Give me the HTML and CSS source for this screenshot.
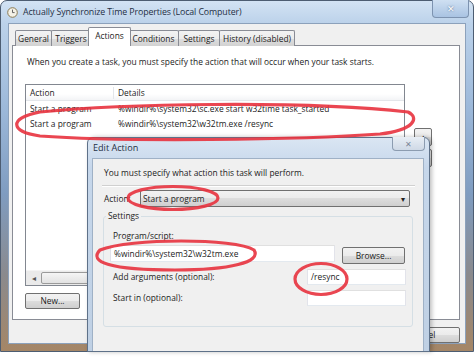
FILE: index.html
```html
<!DOCTYPE html>
<html>
<head>
<meta charset="utf-8">
<link rel="stylesheet" href="styles.css">
</head>
<body>
<div class="win">
  <div class="tbar">
    <svg class="ticon" width="11" height="11" viewBox="0 0 11 11"><circle cx="5.5" cy="5.5" r="4.8" fill="#f4f1e6" stroke="#8a7a52" stroke-width="1"/><path d="M5.5 2.6V5.6H7.6" fill="none" stroke="#555" stroke-width="0.9"/></svg>
    <span class="ttext">Actually Synchronize Time Properties (Local Computer)</span>
    <div class="tclose">&#x2715;</div>
  </div>
  <div class="client">
    <div class="tabs">
      <div class="tab t1">General</div>
      <div class="tab t2">Triggers</div>
      <div class="tab t3 sel">Actions</div>
      <div class="tab t4">Conditions</div>
      <div class="tab t5">Settings</div>
      <div class="tab t6">History (disabled)</div>
    </div>
    <div class="panel">
      <div class="intro">When you create a task, you must specify the action that will occur when your task starts.</div>
      <div class="listarea">
        <div class="list">
          <div class="lhead"><div class="c1">Action</div><div class="c2">Details</div></div>
          <div class="lrow"><div class="c1">Start a program</div><div class="c2">%windir%\system32\sc.exe start w32time task_started</div></div>
          <div class="lrow"><div class="c1">Start a program</div><div class="c2">%windir%\system32\w32tm.exe /resync</div></div>
          <div class="lfill"></div>
          <div class="hscroll"><div class="sarrow">&#x25C2;</div><div class="thumb"></div></div>
        </div>
        <div class="sidebtns">
          <div class="sbtn">&#x25B4;</div>
          <div class="sbtn">&#x25BE;</div>
        </div>
      </div>
      <div class="pbtns">
        <div class="btn newb">New...</div>
      </div>
    </div>
    <div class="dlgbtns">
      <div class="btn cancelb">Cancel</div>
    </div>
  </div>
</div>

<div class="dlg">
  <div class="dtbar">
    <span class="dtitle">Edit Action</span>
    <div class="dclose">&#x2715;</div>
  </div>
  <div class="dclient">
    <div class="dintro">You must specify what action this task will perform.</div>
    <div class="sep"></div>
    <div class="arow">
      <span class="alabel">Action:</span>
      <div class="combo"><span>Start a program</span><span class="carrow">&#x25BE;</span></div>
    </div>
    <fieldset class="group">
      <legend>Settings</legend>
      <div class="pslabel">Program/script:</div>
      <div class="psrow">
        <div class="input wide">%windir%\system32\w32tm.exe</div>
        <div class="btn browse">Browse...</div>
      </div>
      <div class="argrow r1"><span>Add arguments (optional):</span><div class="input short">/resync</div></div>
      <div class="argrow r2"><span>Start in (optional):</span><div class="input short"></div></div>
    </fieldset>
  </div>
</div>

<svg class="marks" width="474" height="359" viewBox="0 0 474 359">
  <g fill="none" stroke="#e8333f" stroke-width="3.2" stroke-linecap="round" opacity="0.9">
    <path d="M40 112 C120 104 300 100 408 112 C420 118 414 130 380 134 C300 140 120 142 40 136 C10 132 8 118 40 112 Z"/>
    <ellipse cx="173" cy="198" rx="45" ry="11.5"/>
    <path d="M100 250 C130 238 235 238 254 250 C262 262 230 270 175 270 C110 270 88 262 100 250 Z"/>
    <ellipse cx="321" cy="279" rx="26" ry="15.5"/>
  </g>
</svg>
</body>
</html>
```
FILE: styles.css
```css
* { box-sizing: border-box; }
body {
  margin: 0;
  width: 474px;
  height: 359px;
  overflow: hidden;
  background: #fff;
  position: relative;
  font-family: "Open Sans", "Noto Sans", sans-serif;
  font-size: 8.4px;
  color: #1b1b1b;
  line-height: 12px;
}
.win {
  height: 352px;
  display: flex;
  flex-direction: column;
  background: linear-gradient(to bottom, #d3e3f4 0px, #bcd2ea 22px, #9db9da 30%, #7f9cc0 55%, #8a8a8e 78%, #a58666 100%);
  border: 1px solid #4d5d72;
  border-radius: 7px 7px 0 0;
}
.tbar {
  height: 22px;
  display: flex;
  align-items: center;
  padding-left: 6px;
  padding-right: 4px;
}
.ticon { margin-right: 5px; }
.ttext { font-size: 8.8px; color: #1f2f44; flex: 1; letter-spacing: -0.1px; }
.tclose {
  width: 37px;
  height: 18px;
  align-self: flex-start;
  margin-top: -1px;
  border: 1px solid #7d93b0;
  border-top: none;
  border-radius: 0 0 4px 4px;
  background: linear-gradient(#cfe0f2, #a9c3e2);
  color: #fff;
  font-size: 9px;
  display: flex;
  align-items: center;
  justify-content: center;
  text-shadow: 0 0 2px #4a6080;
}
.client {
  flex: 1;
  margin: 0 7px 7px 7px;
  background: #f0f0f0;
  border: 1px solid #8ca1bb;
  padding: 3px 5px 0 3px;
  display: flex;
  flex-direction: column;
}
.tabs {
  display: flex;
  align-items: flex-end;
  height: 19px;
  padding-left: 3px;
  margin-bottom: -1px;
  position: relative;
  z-index: 1;
}
.tab {
  height: 16px;
  border: 1px solid #898c95;
  border-bottom: none;
  border-radius: 2px 2px 0 0;
  background: linear-gradient(#f3f3f3, #ececec 50%, #dedede 50%, #d2d2d2);
  display: flex;
  align-items: center;
  justify-content: center;
  margin-right: -1px;
  white-space: nowrap;
}
.tab.sel {
  height: 19px;
  background: #fff;
  position: relative;
  z-index: 2;
  margin-left: -2px;
  margin-right: -3px;
  padding-bottom: 2px;
}
.t1 { width: 37px; }
.t2 { width: 40px; }
.t3 { width: 43px; }
.t4 { width: 51px; }
.t5 { width: 42px; }
.t6 { width: 76px; }
.panel {
  height: 275px;
  background: #fff;
  border: 1px solid #898c95;
  padding: 10px 0 0 12px;
  display: flex;
  flex-direction: column;
}
.intro { margin-left: 2px; white-space: nowrap; }
.listarea { display: flex; margin-top: 16px; }
.list {
  width: 380px;
  height: 202px;
  border: 1px solid #828790;
  display: flex;
  flex-direction: column;
}
.lhead {
  height: 16px;
  display: flex;
  align-items: center;
  background: linear-gradient(#fff 60%, #f3f4f6);
  border-bottom: 1px solid #e3e6ea;
}
.lhead .c1 { border-right: 1px solid #e3e6ea; }
.c1 { width: 88px; padding-left: 4px; white-space: nowrap; }
.c2 { padding-left: 4px; white-space: nowrap; }
.lrow { height: 15px; display: flex; align-items: center; }
.lfill { flex: 1; }
.hscroll {
  height: 15px;
  display: flex;
  background: #eaeaea;
  border-top: 1px solid #f4f4f4;
}
.sarrow {
  width: 15px;
  display: flex;
  align-items: center;
  justify-content: center;
  color: #555;
  font-size: 8px;
}
.thumb {
  width: 260px;
  margin: 1px 0;
  border: 1px solid #9a9a9a;
  border-radius: 2px;
  background: linear-gradient(to bottom, #f5f5f5, #e2e2e2);
}
.sidebtns { margin-left: 9px; margin-top: 44px; display: flex; flex-direction: column; gap: 3px; }
.sbtn {
  width: 18px;
  height: 18px;
  border: 1px solid #707070;
  border-radius: 2px;
  background: linear-gradient(#f2f2f2, #ebebeb 50%, #dddddd 50%, #cfcfcf);
  display: flex;
  align-items: center;
  justify-content: center;
  font-size: 9px;
  color: #222;
}
.btn {
  height: 16px;
  border: 1px solid #707070;
  border-radius: 2px;
  background: linear-gradient(#f2f2f2, #ebebeb 50%, #dddddd 50%, #cfcfcf);
  display: flex;
  align-items: center;
  justify-content: center;
  white-space: nowrap;
}
.pbtns { display: flex; gap: 6px; margin-top: 7px; }
.pbtns .btn { width: 55px; }
.dlgbtns { display: flex; justify-content: flex-end; gap: 6px; margin-top: 7px; }
.dlgbtns .btn { width: 75px; }

.dlg {
  position: absolute;
  left: 87px;
  top: 137px;
  width: 343px;
  height: 215px;
  border: 1px solid #5e7189;
  border-radius: 6px 6px 0 0;
  background: linear-gradient(to bottom, #dae6f3, #c6d7eb 30px, #bfd0e4 100%);
  padding: 0 5px 0 4px;
  display: flex;
  flex-direction: column;
  box-shadow: 2px 0 4px rgba(0,0,0,0.25);
}
.dtbar { height: 20px; display: flex; align-items: flex-start; }
.dtitle { flex: 1; font-size: 9.1px; color: #1f2f44; margin-top: 4px; margin-left: 1px; }
.dclose {
  width: 33px;
  height: 14px;
  margin-top: -1px;
  margin-right: -1px;
  border: 1px solid #8c9cb0;
  border-top: none;
  border-radius: 0 0 4px 4px;
  background: linear-gradient(#e8eef5, #cfd9e6);
  color: #7a8696;
  font-size: 8px;
  display: flex;
  align-items: center;
  justify-content: center;
}
.dclient {
  flex: 1;
  background: #f0f0f0;
  border: 1px solid #9fb1c6;
  border-bottom: none;
  padding: 8px 0 0 11px;
}
.dintro { white-space: nowrap; }
.sep { height: 2px; margin: 6px 8px 0 -2px; border-top: 1px solid #d0d0d0; border-bottom: 1px solid #fff; }
.arow { display: flex; align-items: center; margin-top: 3px; }
.alabel { width: 36px; }
.combo {
  width: 270px;
  height: 17px;
  border: 1px solid #707070;
  border-radius: 2px;
  background: linear-gradient(#f2f2f2, #ebebeb 50%, #dddddd 50%, #cfcfcf);
  display: flex;
  align-items: center;
  justify-content: space-between;
  padding: 0 4px 0 2px;
}
.carrow { font-size: 8px; color: #222; }
.group {
  margin: 3px 10px 0 -1px;
  padding: 0 0 20px 9px;
  border: 1px solid #d5dfe5;
  border-radius: 3px;
}
.group legend { padding: 0 2px; margin-left: -7px; }
.pslabel { margin-top: 8px; }
.psrow { display: flex; align-items: flex-start; margin-top: 3px; margin-left: -3px; }
.input {
  height: 17px;
  background: #fff;
  border: 1px solid #abadb3;
  border-top-color: #e0e0e0;
  border-left-color: #e2e3ea;
  border-right-color: #e2e3ea;
  border-bottom-color: #e3e9ef;
  display: flex;
  align-items: center;
  padding-left: 3px;
  white-space: nowrap;
}
.wide { width: 225px; }
.browse { width: 63px; height: 17px; margin-left: 7px; margin-top: 2px; }
.argrow { display: flex; align-items: center; justify-content: space-between; margin-right: 6px; }
.argrow.r1 { margin-top: 5px; }
.argrow.r2 { margin-top: 5px; }
.short { width: 99px; height: 16px; }
.marks { position: absolute; left: 0; top: 0; pointer-events: none; }
```
